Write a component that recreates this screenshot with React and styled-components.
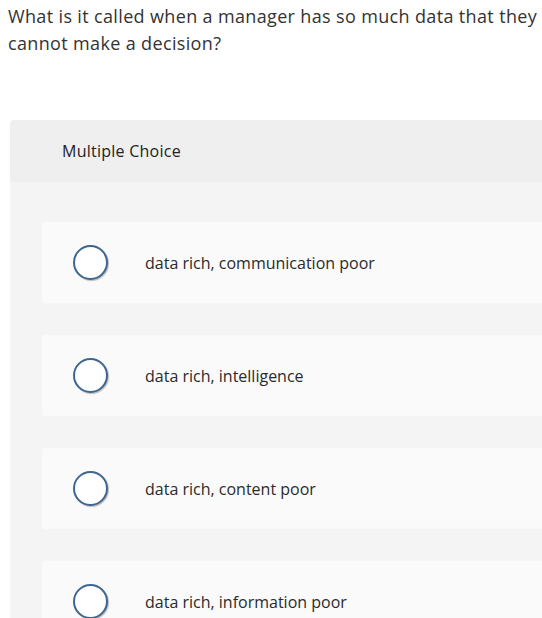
import React from "react";
import styled, { createGlobalStyle } from "styled-components";

const GlobalStyle = createGlobalStyle`
  body {
    margin: 0;
    overflow: hidden;
    background: #ffffff;
    font-family: "Open Sans", Lato, Arial, sans-serif;
    color: #333333;
  }
`;

const choices = [
  "data rich, communication poor",
  "data rich, intelligence",
  "data rich, content poor",
  "data rich, information poor",
];

function App() {
  return (
    <>
      <GlobalStyle />
      <Page>
        <Question>
          What is it called when a manager has so much data that they cannot
          make a decision?
        </Question>
        <Panel>
          <PanelHeader>Multiple Choice</PanelHeader>
          <PanelBody>
            {choices.map((c) => (
              <Choice key={c}>
                <Radio />
                <ChoiceText>{c}</ChoiceText>
              </Choice>
            ))}
          </PanelBody>
        </Panel>
      </Page>
    </>
  );
}

const Page = styled.div`
  width: 580px;
  padding: 3px 0 0 8px;
`;

const Question = styled.div`
  width: 534px;
  font-size: 18px;
  line-height: 27px;
  letter-spacing: 0.35px;
  color: #333333;
`;

const Panel = styled.div`
  margin: 63px 0 0 2px;
  border-radius: 4px 0 0 0;
  overflow: hidden;
  background: #f4f4f4;
`;

const PanelHeader = styled.div`
  height: 62px;
  display: flex;
  align-items: center;
  padding-left: 52px;
  background: #efefef;
  font-size: 16px;
  letter-spacing: 0.25px;
  color: #222222;
`;

const PanelBody = styled.div`
  display: flex;
  flex-direction: column;
  gap: 32px;
  padding: 40px 0 40px 32px;
`;

const Choice = styled.div`
  height: 81px;
  display: flex;
  align-items: center;
  padding-left: 31px;
  background: #fafafa;
  border-radius: 4px 0 0 4px;
`;

const Radio = styled.span`
  box-sizing: border-box;
  width: 35px;
  height: 35px;
  border-radius: 50%;
  border: 2px solid #3d6690;
  background: #ffffff;
  box-shadow: 1px 1px 1px rgba(0, 0, 0, 0.25);
  flex-shrink: 0;
`;

const ChoiceText = styled.span`
  margin-left: 37px;
  font-size: 16px;
  color: #2b2b2b;
`;

export default App;
